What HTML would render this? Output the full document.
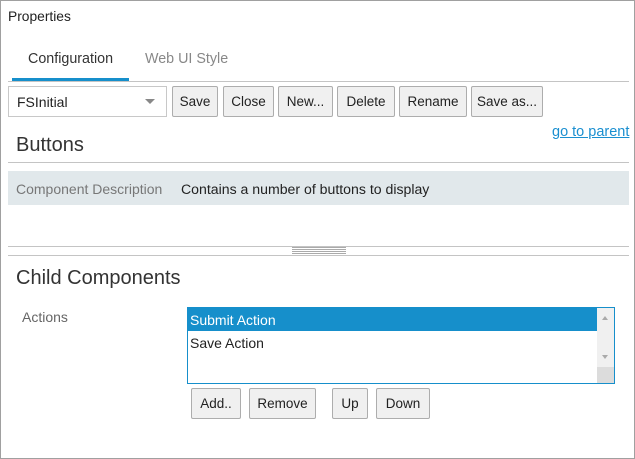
<!DOCTYPE html>
<html><head><style>
*{box-sizing:border-box;margin:0;padding:0}
body{width:635px;height:459px;background:#fff;font-family:"Liberation Sans",sans-serif;color:#222;position:relative;overflow:hidden}
.frame{position:absolute;left:0;top:0;width:635px;height:459px;border:1px solid #a0a0a0}
.a{position:absolute;white-space:nowrap}
.btn{position:absolute;height:31px;top:86px;background:#f0f0f0;border:1px solid #adadad;border-radius:2px;font-size:13.5px;line-height:30px;text-align:center;color:#222}
.hl{position:absolute;height:1px;background:#c4c4c4}
</style></head><body>
<div class="frame"></div>
<div class="a" style="left:8px;top:9px;font-size:13.8px">Properties</div>
<div class="a" style="left:28px;top:51px;font-size:14.3px;color:#333">Configuration</div>
<div class="a" style="left:145px;top:51px;font-size:14.3px;color:#888">Web UI Style</div>
<div class="a" style="left:12px;top:78px;width:117px;height:3px;background:#168fcb"></div>
<div class="hl" style="left:8px;top:81px;width:621px"></div>
<div class="a" style="left:8px;top:86px;width:159px;height:31px;border:1px solid #c8c8c8;font-size:14px;line-height:30px;padding-left:8px">FSInitial</div>
<div class="a" style="left:145px;top:99px;width:0;height:0;border-left:5px solid transparent;border-right:5px solid transparent;border-top:5px solid #888"></div>
<div class="btn" style="left:172px;width:46px">Save</div>
<div class="btn" style="left:223px;width:51px">Close</div>
<div class="btn" style="left:278px;width:55px">New...</div>
<div class="btn" style="left:337px;width:58px">Delete</div>
<div class="btn" style="left:399px;width:68px">Rename</div>
<div class="btn" style="left:471px;width:72px">Save as...</div>
<div class="a" style="left:552px;top:124px;font-size:14.5px;color:#1a8fd0;text-decoration:underline">go to parent</div>
<div class="a" style="left:16px;top:134px;font-size:20px;color:#333">Buttons</div>
<div class="hl" style="left:8px;top:162px;width:621px"></div>
<div class="a" style="left:8px;top:171px;width:621px;height:34px;background:#e1e8eb"></div>
<div class="a" style="left:16px;top:181px;font-size:14px;color:#777">Component Description</div>
<div class="a" style="left:181px;top:181px;font-size:14.1px;color:#222">Contains a number of buttons to display</div>
<div class="hl" style="left:8px;top:246px;width:621px"></div>
<div class="a" style="left:292px;top:247px;width:54px;height:7px;background:repeating-linear-gradient(#aaa 0 1px,#fff 1px 2px)"></div>
<div class="hl" style="left:8px;top:255px;width:621px"></div>
<div class="a" style="left:16px;top:267px;font-size:20px;color:#333">Child Components</div>
<div class="a" style="left:22px;top:309px;font-size:14px;color:#666">Actions</div>
<div class="a" style="left:187px;top:307px;width:428px;height:77px;border:1px solid #168fcb;background:#fff">
 <div class="a" style="left:0;top:0;width:409px;height:23px;background:#168fcb;color:#fff;font-size:14px;line-height:24px;padding-left:2px">Submit Action</div>
 <div class="a" style="left:2px;top:27px;font-size:14px">Save Action</div>
 <div class="a" style="left:409px;top:0;width:17px;height:75px;background:#f0f0f0"></div>
 <div class="a" style="left:414px;top:8px;border-left:3px solid transparent;border-right:3px solid transparent;border-bottom:4px solid #aaa"></div>
 <div class="a" style="left:414px;top:47px;border-left:3px solid transparent;border-right:3px solid transparent;border-top:4px solid #aaa"></div>
 <div class="a" style="left:409px;top:59px;width:17px;height:16px;background:#dcdcdc"></div>
</div>
<div class="btn" style="top:388px;left:191px;width:50px">Add..</div>
<div class="btn" style="top:388px;left:249px;width:67px">Remove</div>
<div class="btn" style="top:388px;left:332px;width:36px">Up</div>
<div class="btn" style="top:388px;left:376px;width:54px">Down</div>
</body></html>
